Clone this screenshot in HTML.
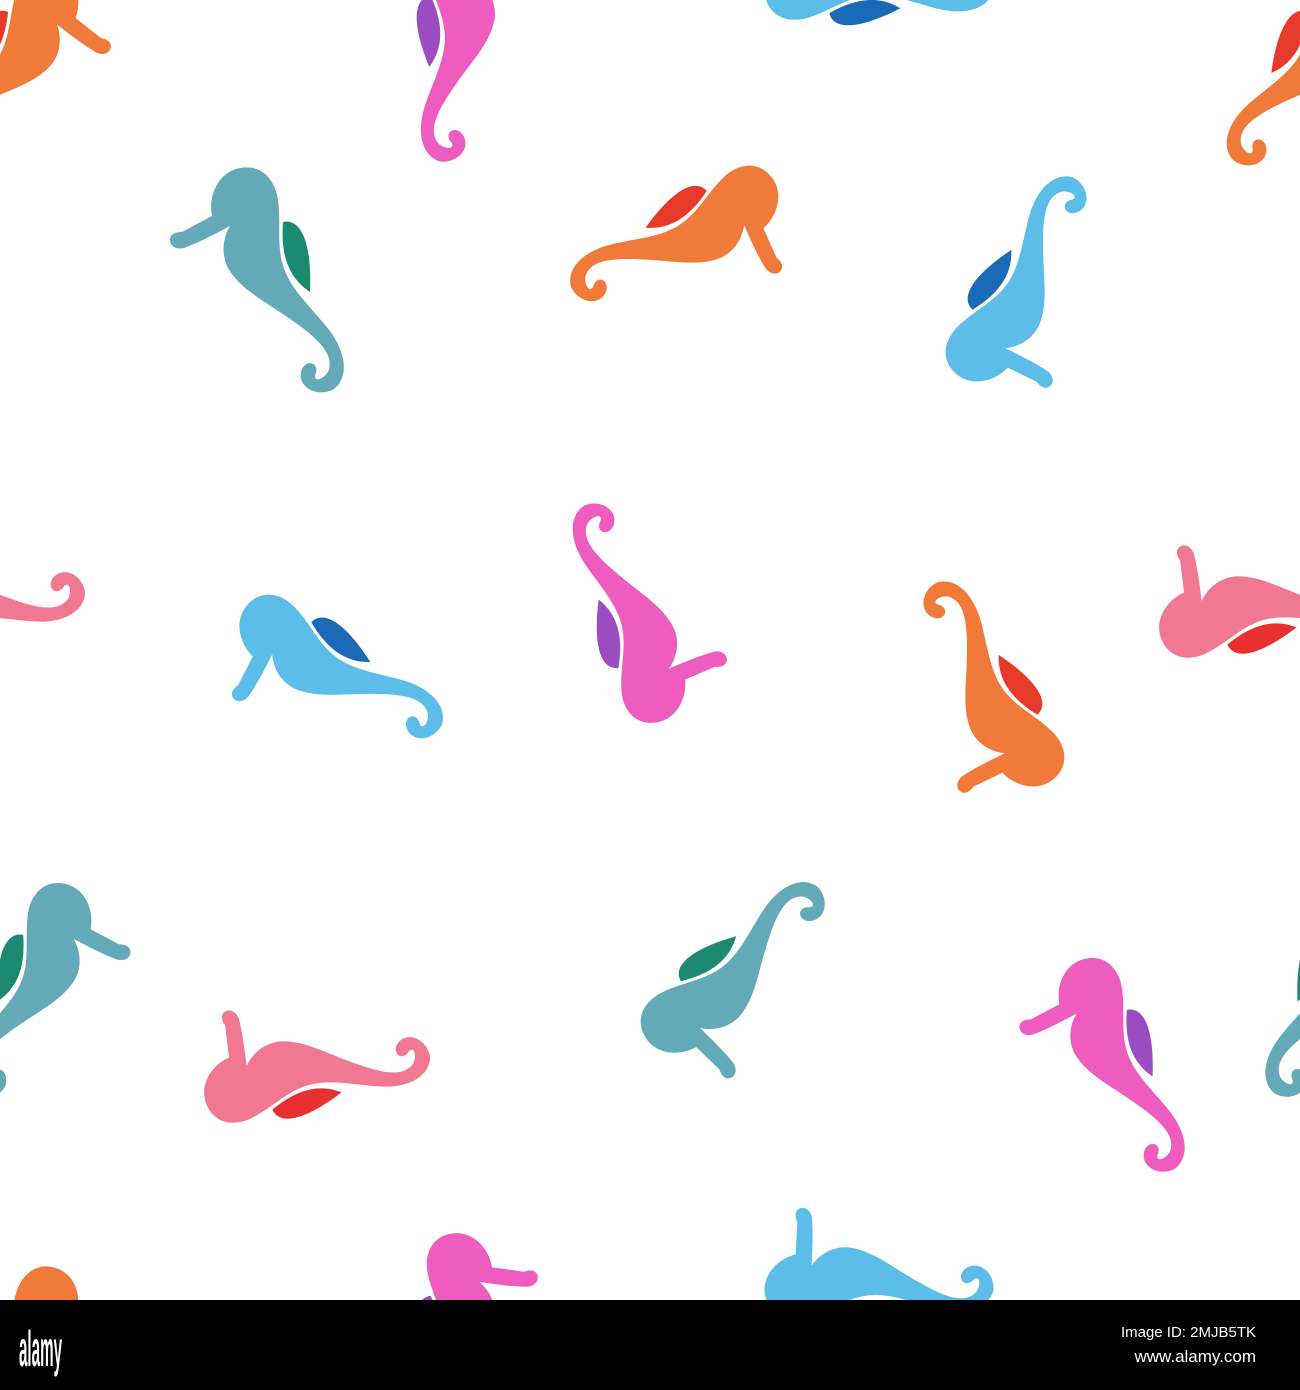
<!DOCTYPE html>
<html><head><meta charset="utf-8"><style>
html,body{margin:0;padding:0;background:#fff;width:1300px;height:1390px;overflow:hidden}
svg{display:block}
</style></head><body>
<svg width="1300" height="1390" viewBox="0 0 1300 1390" xmlns="http://www.w3.org/2000/svg">
<defs>
<path id="b" d="M10,80 C10,74 16,72 22,72 L52,56 C48,36 58,12 80,8 C100,4 115,18 118,40 C121,62 117,82 122,102 C128,126 146,142 166,166 C186,190 190,216 174,229 C158,238 138,228 141,212 C144,199 159,201 156,213 C152,221 161,222 168,212 C175,196 160,181 140,166 C108,142 82,132 68,108 C60,92 64,76 70,66 C55,74 40,82 24,88 C16,90 10,86 10,80 Z"/>
<path id="f" d="M123,62 C142,58 152,85 150,132 C132,120 120,100 123,62 Z"/>
<clipPath id="c"><rect width="1300" height="1300"/></clipPath>
</defs>
<rect width="1300" height="1300" fill="#fff"/>
<g clip-path="url(#c)">
<g transform="translate(260,280) scale(1) translate(-100,-120)"><use href="#b" fill="#63a9b8"/><use href="#f" fill="#1b8a70"/></g>
<g transform="translate(690,248) rotate(38) scale(-0.95,0.95) translate(-100,-120)"><use href="#b" fill="#f07a3a"/><use href="#f" fill="#e63a2a"/></g>
<g transform="translate(1030,295) rotate(-126) scale(0.95) translate(-100,-120)"><use href="#b" fill="#5cbde8"/><use href="#f" fill="#1a6ab8"/></g>
<g transform="translate(470,40) rotate(-20) scale(-0.95,0.95) translate(-100,-120)"><use href="#b" fill="#ee5cc0"/><use href="#f" fill="#9a4cc0"/></g>
<g transform="translate(470,1340) rotate(-20) scale(-0.95,0.95) translate(-100,-120)"><use href="#b" fill="#ee5cc0"/><use href="#f" fill="#9a4cc0"/></g>
<g transform="translate(870,-30) rotate(245) scale(-0.95,0.95) translate(-100,-120)"><use href="#b" fill="#5cbde8"/><use href="#f" fill="#1a6ab8"/></g>
<g transform="translate(870,1270) rotate(245) scale(-0.95,0.95) translate(-100,-120)"><use href="#b" fill="#5cbde8"/><use href="#f" fill="#1a6ab8"/></g>
<g transform="translate(1320,70) rotate(10) scale(-0.95,0.95) translate(-100,-120)"><use href="#b" fill="#f07a3a"/><use href="#f" fill="#e63a2a"/></g>
<g transform="translate(20,70) rotate(10) scale(-0.95,0.95) translate(-100,-120)"><use href="#b" fill="#f07a3a"/><use href="#f" fill="#e63a2a"/></g>
<g transform="translate(1320,1370) rotate(10) scale(-0.95,0.95) translate(-100,-120)"><use href="#b" fill="#f07a3a"/><use href="#f" fill="#e63a2a"/></g>
<g transform="translate(20,1370) rotate(10) scale(-0.95,0.95) translate(-100,-120)"><use href="#b" fill="#f07a3a"/><use href="#f" fill="#e63a2a"/></g>
<g transform="translate(1260,595) rotate(235) scale(-0.95,0.95) translate(-100,-120)"><use href="#b" fill="#f07890"/><use href="#f" fill="#e83030"/></g>
<g transform="translate(-40,595) rotate(235) scale(-0.95,0.95) translate(-100,-120)"><use href="#b" fill="#f07890"/><use href="#f" fill="#e83030"/></g>
<g transform="translate(325,680) rotate(-35) scale(0.95) translate(-100,-120)"><use href="#b" fill="#5cbde8"/><use href="#f" fill="#1a6ab8"/></g>
<g transform="translate(645,615) rotate(185) scale(0.95) translate(-100,-120)"><use href="#b" fill="#ee5cc0"/><use href="#f" fill="#9a4cc0"/></g>
<g transform="translate(980,700) rotate(126) scale(-0.95,0.95) translate(-100,-120)"><use href="#b" fill="#f07a3a"/><use href="#f" fill="#e63a2a"/></g>
<g transform="translate(45,990) rotate(0) scale(-0.95,0.95) translate(-100,-120)"><use href="#b" fill="#63a9b8"/><use href="#f" fill="#1b8a70"/></g>
<g transform="translate(1345,990) rotate(0) scale(-0.95,0.95) translate(-100,-120)"><use href="#b" fill="#63a9b8"/><use href="#f" fill="#1b8a70"/></g>
<g transform="translate(740,985) rotate(252) scale(0.95) translate(-100,-120)"><use href="#b" fill="#63a9b8"/><use href="#f" fill="#1b8a70"/></g>
<g transform="translate(305,1060) rotate(235) scale(-0.95,0.95) translate(-100,-120)"><use href="#b" fill="#f07890"/><use href="#f" fill="#e83030"/></g>
<g transform="translate(1105,1065) scale(0.95) translate(-100,-120)"><use href="#b" fill="#ee5cc0"/><use href="#f" fill="#9a4cc0"/></g>
</g>
<rect x="0" y="1300" width="1300" height="90" fill="#000"/>
<text x="19" y="1366" fill="#fff" font-family="Liberation Sans, sans-serif" font-weight="bold" font-size="50" textLength="43" lengthAdjust="spacingAndGlyphs">alamy</text>
<text x="1256" y="1337" fill="#fff" text-anchor="end" font-family="Liberation Sans, sans-serif" font-size="15">Image ID: 2MJB5TK</text>
<text x="1256" y="1362" fill="#fff" text-anchor="end" font-family="Liberation Sans, sans-serif" font-size="17">www.alamy.com</text>
</svg>
</body></html>
